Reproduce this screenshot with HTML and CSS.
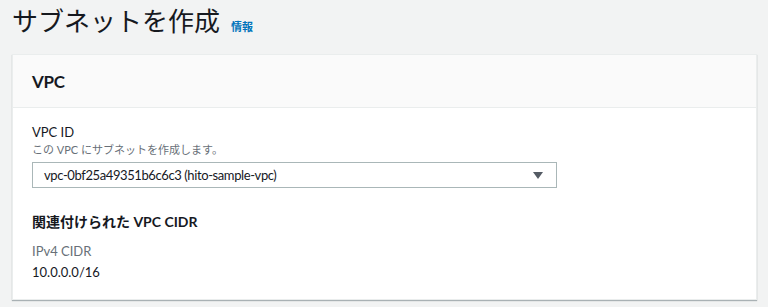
FILE: index.html
```html
<!DOCTYPE html>
<html lang="ja">
<head>
<meta charset="UTF-8">
<title>サブネットを作成</title>
<link rel="stylesheet" href="styles.css">
</head>
<body>

<div class="page-head">
  <h1>サブネットを作成</h1>
  <a class="info" href="#">情報</a>
</div>

<div class="card">
  <div class="card-head">VPC</div>
  <div class="card-body">
    <div class="field">
      <div class="label">VPC ID</div>
      <div class="hint">この VPC にサブネットを作成します。</div>
      <div class="select">
        <span>vpc-0bf25a49351b6c6c3 (hito-sample-vpc)</span>
        <svg width="10" height="7" viewBox="0 0 10 7"><path d="M0 0h10L5 7z" fill="#545b64"/></svg>
      </div>
    </div>

    <h3>関連付けられた VPC CIDR</h3>
    <div class="kv">
      <div class="key">IPv4 CIDR</div>
      <div class="val">10.0.0.0/16</div>
    </div>
  </div>
</div>

</body>
</html>
```

FILE: styles.css
```css
*{box-sizing:border-box}
body{
  margin:0;
  background:#f2f3f3;
  font-family:Lato,"Noto Sans CJK JP",sans-serif;
  color:#16191f;
  height:307px;
  overflow:hidden;
}

/* PAGE HEADER */
.page-head{
  display:flex;
  align-items:baseline;
  gap:11px;
  padding:0 12px;
  height:54px;
}
.page-head h1{
  margin:0;
  font-size:26px;
  font-weight:400;
  line-height:42px;
  color:#16191f;
}
.info{
  font-size:11px;
  font-weight:700;
  color:#0073bb;
  text-decoration:none;
}

/* CARD */
.card{
  margin:0 11px 0 12px;
  background:#fff;
  border:1px solid #eaeded;
  box-shadow:0 1px 1px 0 rgba(0,28,36,.3);
}
.card-head{
  background:#fafafa;
  border-bottom:1px solid #eaeded;
  padding:0 19px;
  height:53px;
  line-height:53px;
  font-size:17px;
  font-weight:700;
  letter-spacing:-.3px;
}
.card-body{
  padding:14px 19px 17px;
}

.label{
  font-size:13px;
  line-height:20px;
}
.hint{
  font-size:11px;
  line-height:16px;
  color:#687078;
  margin-bottom:4px;
}
.select{
  width:525px;
  height:26px;
  border:1px solid #aab7b8;
  display:flex;
  align-items:center;
  justify-content:space-between;
  padding:0 13px 0 11px;
  font-size:13px;
  letter-spacing:-.4px;
}

h3{
  margin:24px 0 0;
  font-size:14px;
  line-height:20px;
  font-weight:700;
}
.kv{
  margin-top:9px;
  font-size:13px;
  line-height:20px;
}
.key{color:#687078}
.val{margin-top:1px}
```
